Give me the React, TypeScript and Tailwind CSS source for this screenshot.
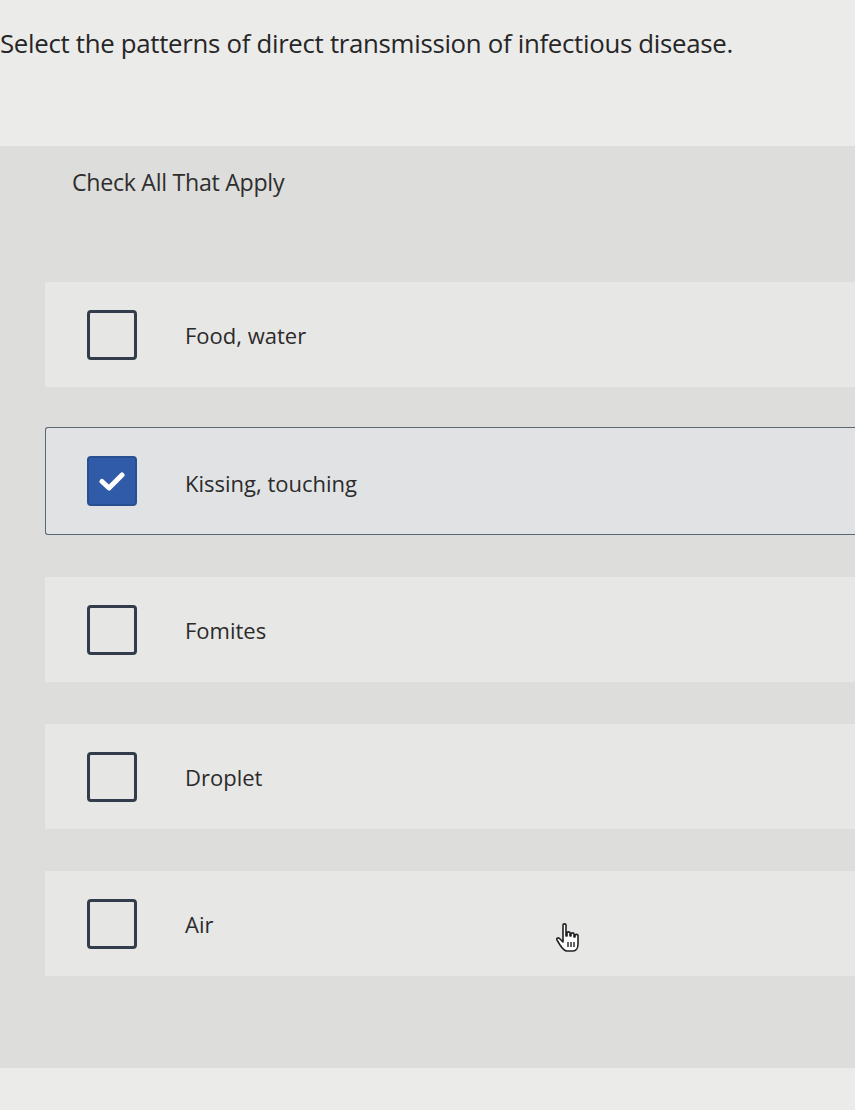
import React from "react";

const OPTIONS = [
  { label: "Food, water", checked: false },
  { label: "Kissing, touching", checked: true },
  { label: "Fomites", checked: false },
  { label: "Droplet", checked: false },
  { label: "Air", checked: false },
];

function Box({ checked }: { checked: boolean }) {
  if (checked) {
    return (
      <span className="flex h-[50px] w-[50px] shrink-0 items-center justify-center rounded-[4px] border-2 border-[#284f8f] bg-[#2f5ba8]">
        <svg width="26" height="20" viewBox="0 0 26 20">
          <path
            d="M3 10.5 L10 17 L23 4"
            fill="none"
            stroke="#ffffff"
            strokeWidth="5"
            strokeLinecap="round"
            strokeLinejoin="round"
          />
        </svg>
      </span>
    );
  }
  return (
    <span className="h-[50px] w-[50px] shrink-0 rounded-[4px] border-[3px] border-[#323c4b] bg-[#e6e6e5]" />
  );
}

function HandCursor() {
  return (
    <svg
      className="absolute left-[554px] top-[922px]"
      width="30"
      height="34"
      viewBox="0 0 30 34"
    >
      <path
        d="M9 3 C9 1.5 12 1.5 12 3 L12 14 L13 14 L13 11 C13 9.5 16 9.5 16 11 L16 14 L17 14 L17 12 C17 10.5 20 10.5 20 12 L20 15 L21 15 L21 13.5 C21 12 24 12 24 13.5 L24 22 C24 26 22 29 19 29 L13 29 C10 29 8 26 6 23 L3 18 C2 16.5 4 15 5.5 16.5 L9 20 Z"
        fill="#ffffff"
        stroke="#222222"
        strokeWidth="1.6"
        strokeLinejoin="round"
      />
      <path d="M14 20 L14 25 M17 20 L17 25 M20 20 L20 25" stroke="#222222" strokeWidth="1.4" />
    </svg>
  );
}

export default function App() {
  return (
    <div
      className="relative h-[1110px] w-[855px] overflow-hidden bg-[#ebebea] text-[#2b2b2b]"
      style={{ fontFamily: "'Open Sans', Lato, sans-serif" }}
    >
      <h1 className="pt-[24px] pl-0 text-[25.8px] leading-[38px] font-medium tracking-[-0.3px] text-[#262626]">
        Select the patterns of direct transmission of infectious disease.
      </h1>

      <div className="mt-[84px] h-[922px] bg-[#dddddc] pt-[21px] pb-[90px]">
        <p className="pl-[72px] text-[23.2px] leading-[30px] font-medium tracking-[-0.3px] text-[#2e2e2e]">
          Check All That Apply
        </p>

        <div className="mt-[85px] flex flex-col pl-[45px]">
          {OPTIONS.map((opt) =>
            opt.checked ? (
              <div
                key={opt.label}
                className="mt-[40px] flex h-[108px] items-center gap-[48px] rounded-l-[3px] border border-r-0 border-[#5d6773] bg-[#e0e2e4] pl-[41px]"
              >
                <Box checked />
                <span className="pt-[4px] text-[22px] font-medium text-[#2b2b2b]">{opt.label}</span>
              </div>
            ) : (
              <div
                key={opt.label}
                className="mt-[42px] flex h-[105px] items-center gap-[48px] bg-[#e7e7e6] pl-[42px] first:mt-0"
              >
                <Box checked={false} />
                <span className="pt-[2px] text-[22px] font-medium text-[#2b2b2b]">{opt.label}</span>
              </div>
            )
          )}
        </div>
      </div>

      <HandCursor />
    </div>
  );
}
